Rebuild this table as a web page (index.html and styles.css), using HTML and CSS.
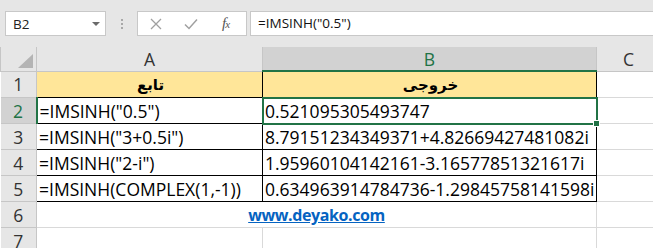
FILE: index.html
```html
<!DOCTYPE html>
<html>
<head>
<meta charset="utf-8">
<link rel="stylesheet" href="styles.css">
</head>
<body>
<div class="toolbar">
  <div class="namebox"><span class="ref">B2</span><span class="caret"></span></div>
  <div class="grip"><i></i><i></i><i></i></div>
  <div class="fbtns">
    <svg class="ic-x" width="12" height="12" viewBox="0 0 12 12"><path d="M1 1L11 11M11 1L1 11" stroke="#a0a0a0" stroke-width="1.3" fill="none"/></svg>
    <svg class="ic-ok" width="14" height="12" viewBox="0 0 14 12"><path d="M1 6.5L5 10.5L13 1.5" stroke="#a0a0a0" stroke-width="1.5" fill="none"/></svg>
    <span class="fx">f<small>x</small></span>
  </div>
  <div class="finput">=IMSINH("0.5")</div>
</div>
<div class="sheet">
  <table class="grid">
    <colgroup><col class="c-h"><col class="c-a"><col class="c-b"><col class="c-c"></colgroup>
    <tr class="hdr">
      <th class="corner"><span class="tri"></span></th>
      <th>A</th>
      <th class="sel">B</th>
      <th>C</th>
    </tr>
    <tr>
      <th class="rh">1</th>
      <td class="t head ar">تابع</td>
      <td class="t head ar">خروجی</td>
      <td></td>
    </tr>
    <tr>
      <th class="rh rsel">2</th>
      <td class="t">=IMSINH("0.5")</td>
      <td class="t active">0.521095305493747<span class="handle"></span></td>
      <td></td>
    </tr>
    <tr>
      <th class="rh">3</th>
      <td class="t">=IMSINH("3+0.5i")</td>
      <td class="t">8.79151234349371+4.82669427481082i</td>
      <td></td>
    </tr>
    <tr>
      <th class="rh">4</th>
      <td class="t">=IMSINH("2-i")</td>
      <td class="t">1.95960104142161-3.16577851321617i</td>
      <td></td>
    </tr>
    <tr>
      <th class="rh">5</th>
      <td class="t">=IMSINH(COMPLEX(1,-1))</td>
      <td class="t">0.634963914784736-1.29845758141598i</td>
      <td></td>
    </tr>
    <tr>
      <th class="rh">6</th>
      <td class="link" colspan="2"><a>www.deyako.com</a></td>
      <td></td>
    </tr>
    <tr>
      <th class="rh">7</th>
      <td></td>
      <td></td>
      <td></td>
    </tr>
  </table>
</div>
</body>
</html>
```
FILE: styles.css
```css
html, body {
  margin: 0;
  padding: 0;
  background: #ffffff;
  overflow: hidden;
}
body {
  width: 653px;
  height: 248px;
  font-family: "Open Sans", sans-serif;
}
.toolbar {
  height: 47px;
  background: #e6e6e6;
  display: flex;
  align-items: flex-start;
  padding-top: 11px;
  box-sizing: border-box;
}
.namebox {
  margin-left: 5px;
  width: 101px;
  height: 25px;
  box-sizing: border-box;
  background: #fff;
  border: 1px solid #c8c8c8;
  display: flex;
  align-items: center;
  justify-content: space-between;
  padding: 0 5px 0 7px;
  font-size: 13.5px;
  color: #222;
}
.caret {
  width: 0;
  height: 0;
  border-left: 4px solid transparent;
  border-right: 4px solid transparent;
  border-top: 4px solid #6a6a6a;
  margin-top: 1px;
}
.grip {
  width: 31px;
  height: 25px;
  display: flex;
  flex-direction: column;
  align-items: center;
  justify-content: center;
  gap: 2px;
}
.grip i {
  display: block;
  width: 2px;
  height: 2px;
  background: #a8a8a8;
}
.fbtns {
  width: 110px;
  height: 25px;
  box-sizing: border-box;
  background: #fff;
  border: 1px solid #c8c8c8;
  display: flex;
  align-items: center;
  padding-left: 12px;
}
.ic-x { margin-right: 22px; }
.ic-ok { margin-right: 24px; }
.fx {
  font-family: "Liberation Serif", serif;
  font-style: italic;
  font-size: 15px;
  color: #555;
  letter-spacing: -1px;
}
.fx small { font-size: 11px; }
.finput {
  margin-left: 3px;
  flex: 1;
  height: 25px;
  box-sizing: border-box;
  background: #fff;
  border: 1px solid #c8c8c8;
  border-right: none;
  font-size: 13.5px;
  line-height: 22px;
  padding-left: 7px;
  color: #111;
}
.grid {
  border-collapse: collapse;
  table-layout: fixed;
  width: 660px;
}
.c-h { width: 36px; }
.c-a { width: 226px; }
.c-b { width: 334px; }
.c-c { width: 64px; }
.grid td, .grid th {
  padding: 0;
  border: 1px solid #d9d9d9;
  height: 25px;
  font-size: 17.5px;
  font-weight: normal;
  white-space: nowrap;
  overflow: visible;
  color: #000;
}
.hdr th {
  height: 23px;
  background: #e6e6e6;
  border-color: #c6c6c6;
  border-top: none;
  color: #333;
  font-size: 17.5px;
  line-height: 22px;
  text-align: center;
}
.hdr th.sel {
  background: #d2d2d2;
  color: #217346;
  border-bottom: 2px solid #217346;
}
.corner {
  position: relative;
}
.tri {
  position: absolute;
  right: 3px;
  bottom: 3px;
  width: 0;
  height: 0;
  border-left: 15px solid transparent;
  border-bottom: 14px solid #b4b4b4;
}
.rh {
  background: #e6e6e6;
  border-color: #c6c6c6 !important;
  border-left: none !important;
  color: #333 !important;
  text-align: center;
  line-height: 24px;
}
.rh.rsel {
  background: #d2d2d2;
  color: #217346 !important;
  border-right: 2px solid #217346 !important;
}
.grid td.t {
  border: 1px solid #000;
  line-height: 24px;
  padding-left: 2px;
  vertical-align: bottom;
}
.grid td.head {
  background: #ffe699;
  text-align: center;
  font-family: "DejaVu Sans", sans-serif;
  font-weight: bold;
  font-size: 15px;
}
.grid td.active {
  position: relative;
  outline: 2px solid #217346;
  outline-offset: -1px;
}
.handle {
  position: absolute;
  right: -4px;
  bottom: -4px;
  width: 5px;
  height: 5px;
  background: #217346;
  border: 1px solid #fff;
  z-index: 2;
}
.grid td.link {
  text-align: center;
  line-height: 24px;
  vertical-align: bottom;
}
.link a {
  color: #0563c1;
  font-weight: bold;
  font-size: 16px;
  letter-spacing: -0.4px;
  text-decoration: underline;
}
```
